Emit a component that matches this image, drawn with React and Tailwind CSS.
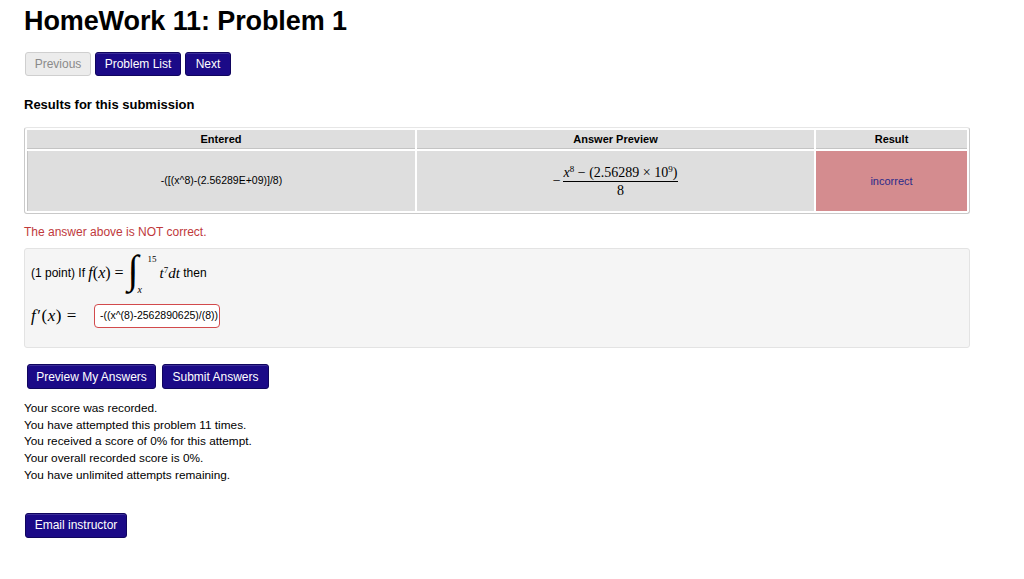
import React from "react";

const navyBtn =
  "bg-[#1b0a87] text-white rounded-[3px] border border-[#10055e] shadow-[inset_0_1px_0_rgba(255,255,255,0.15)] leading-none";

const Serif = ({ children, className = "" }) => (
  <span className={`font-['Liberation_Serif',serif] ${className}`}>{children}</span>
);

const App = () => {
  return (
    <div className="w-[1024px] h-[579px] bg-white font-['Liberation_Sans',Arial,sans-serif] text-black relative overflow-hidden">
      <div className="pl-[24px] pt-[6px] w-[970px]">
        <h1 className="text-[27px] font-bold leading-[30px] tracking-[-0.1px]">HomeWork 11: Problem 1</h1>

        {/* nav buttons */}
        <div className="flex gap-[4px] mt-[16px] ml-[1px]">
          <button className="h-[24px] w-[66px] rounded-[3px] border border-[#cfcfcf] bg-[#ececec] text-[#8a8a8a] text-[12px]">
            Previous
          </button>
          <button className={`${navyBtn} h-[24px] w-[86px] text-[12px]`}>Problem List</button>
          <button className={`${navyBtn} h-[24px] w-[46px] text-[12px]`}>Next</button>
        </div>

        <h2 className="text-[13px] font-bold mt-[21px] leading-[16px]">Results for this submission</h2>

        {/* results table */}
        <div className="mt-[14px] border border-[#c9c9c9] rounded-[3px] border-t-[#e6e6e6]">
          <table className="w-full border-separate border-spacing-[2px] text-[11px]">
            <thead>
              <tr>
                <th className="bg-[#dedede] h-[19px] w-[388px] font-bold border-b border-[#c4c4c4]">Entered</th>
                <th className="bg-[#dedede] h-[19px] w-[397px] font-bold border-b border-[#c4c4c4]">Answer Preview</th>
                <th className="bg-[#dedede] h-[19px] font-bold border-b border-[#c4c4c4]">Result</th>
              </tr>
            </thead>
            <tbody>
              <tr>
                <td className="bg-[#dedede] h-[60px] text-center text-[10.5px] border-l border-[#c4c4c4]">-([(x^8)-(2.56289E+09)]/8)</td>
                <td className="bg-[#dedede] h-[60px] text-center">
                  <div className="inline-flex items-center text-[14px] font-['Liberation_Serif',serif]">
                    <span className="mr-[2px] mt-[-2px]">−</span>
                    <span className="inline-flex flex-col items-center">
                      <span className="px-[1px] border-b border-black leading-[17px]">
                        <i>x</i>
                        <sup className="text-[9px]">8</sup> − (2.56289 × 10<sup className="text-[9px]">9</sup>)
                      </span>
                      <span className="leading-[17px]">8</span>
                    </span>
                  </div>
                </td>
                <td className="bg-[#d48c8f] h-[60px] text-center text-[11px] text-[#2a2a8a]">incorrect</td>
              </tr>
            </tbody>
          </table>
        </div>

        <p className="text-[#c0393b] text-[12px] mt-[11px] leading-[14px]">The answer above is NOT correct.</p>

        {/* problem box */}
        <div className="mt-[9px] bg-[#f5f5f5] border border-[#e3e3e3] rounded-[3px] h-[100px] pl-[6px] pt-[4px]">
          <div className="flex items-center text-[12px] h-[40px]">
            <span>(1 point) If&nbsp;</span>
            <Serif className="text-[16px]">
              <i>f</i>(<i>x</i>)<span className="mx-[4px]">=</span>
            </Serif>
            <span className="relative inline-block w-[22px] h-[40px]">
              <Serif className="absolute left-[0px] top-[-3px] text-[40px] leading-[40px]">∫</Serif>
              <Serif className="absolute left-[20px] top-[0px] text-[9px]">15</Serif>
              <Serif className="absolute left-[10px] top-[29px] text-[10px] italic">x</Serif>
            </span>
            <Serif className="text-[15px] ml-[10px]">
              <i>t</i>
              <sup className="text-[9px]">7</sup>
              <i>dt</i>
            </Serif>
            <span>&nbsp;then</span>
          </div>
          <div className="flex items-center mt-[10px]">
            <Serif className="text-[17px] mr-[12px] tracking-[0.5px]">
              <i>f</i>
              <span className="ml-[1px]">′</span>(<i>x</i>)<span className="mx-[5px]">=</span>
            </Serif>
            <div className="h-[24px] w-[126px] border border-[#d24a4c] rounded-[4px] bg-white text-[10.5px] flex items-center pl-[5px] whitespace-nowrap">
              -((x^(8)-2562890625)/(8))
            </div>
          </div>
        </div>

        {/* submit buttons */}
        <div className="flex gap-[6px] mt-[16px] ml-[3px]">
          <button className={`${navyBtn} h-[25px] w-[129px] text-[12px]`}>Preview My Answers</button>
          <button className={`${navyBtn} h-[25px] w-[107px] text-[12px]`}>Submit Answers</button>
        </div>

        <div className="text-[11.8px] leading-[16.7px] mt-[11px] ml-[0px]">
          <p>Your score was recorded.</p>
          <p>You have attempted this problem 11 times.</p>
          <p>You received a score of 0% for this attempt.</p>
          <p>Your overall recorded score is 0%.</p>
          <p>You have unlimited attempts remaining.</p>
        </div>

        <button className={`${navyBtn} h-[25px] w-[102px] text-[12px] mt-[29px] ml-[1px]`}>Email instructor</button>
      </div>
    </div>
  );
};

export default App;
